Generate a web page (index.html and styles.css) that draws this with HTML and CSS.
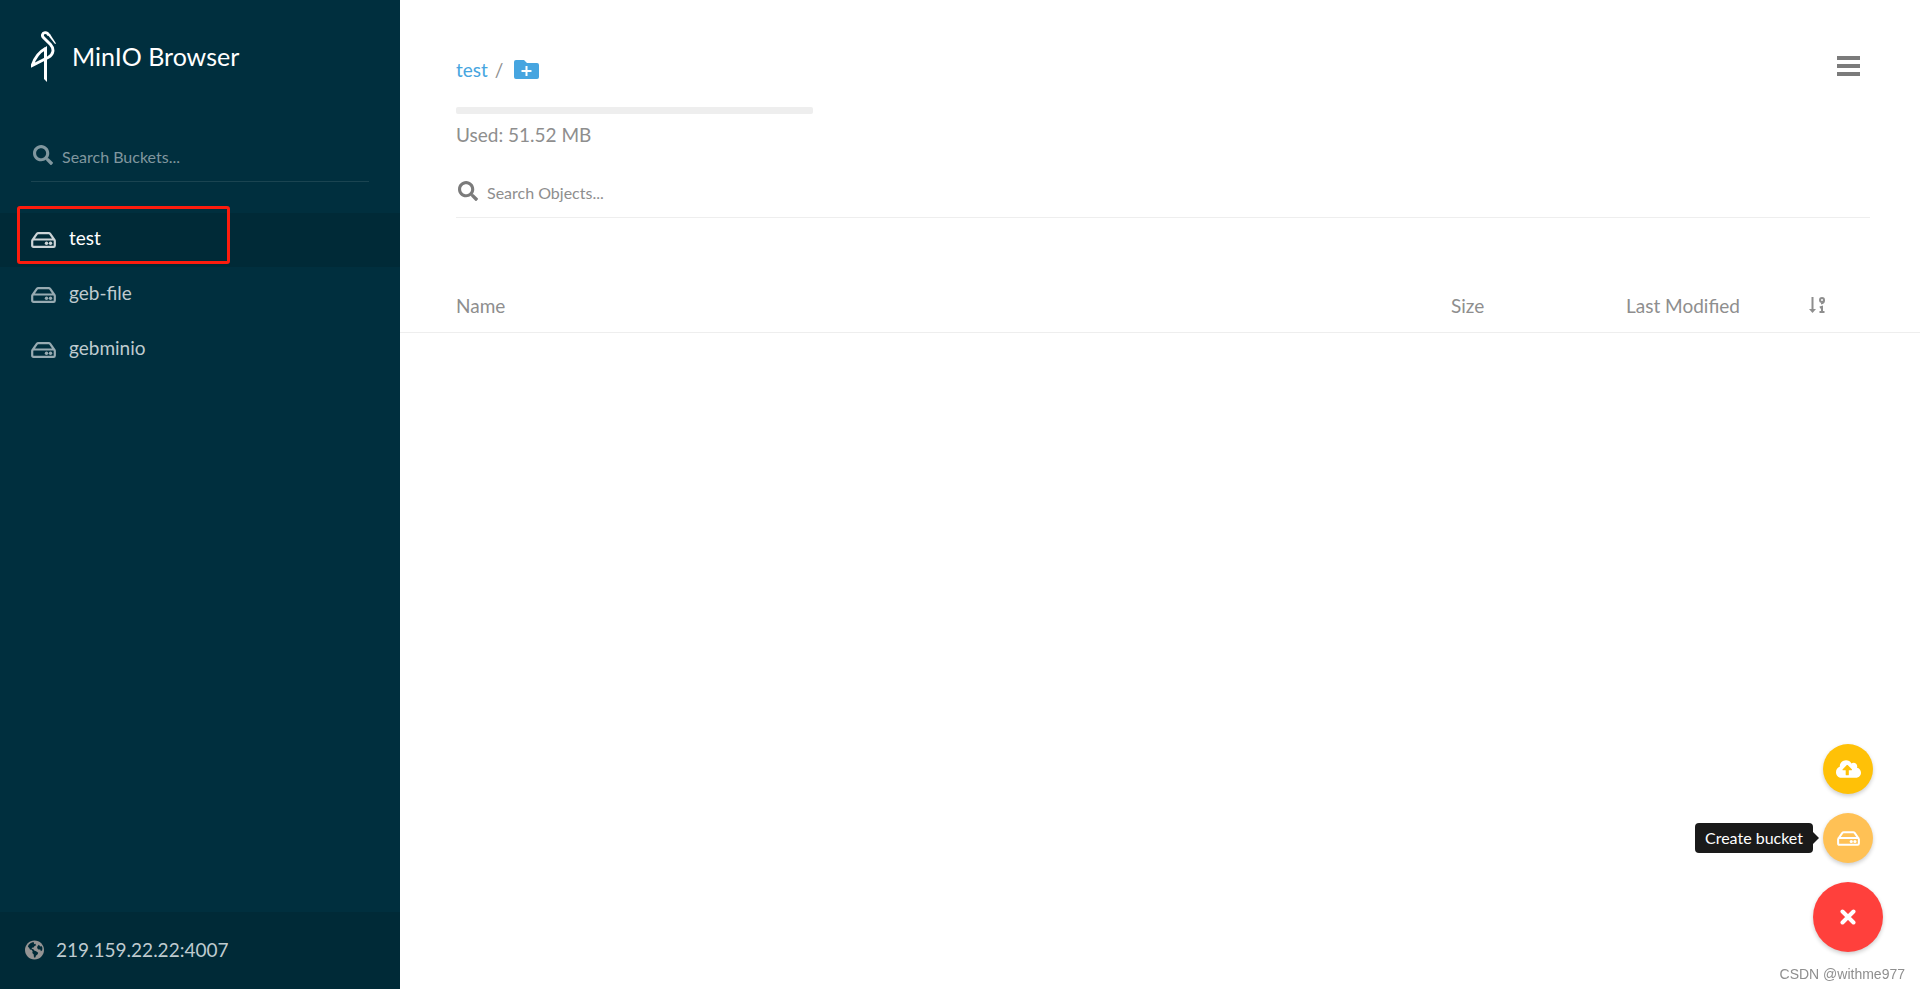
FILE: index.html
```html
<!DOCTYPE html>
<html lang="en">
<head>
    <meta charset="UTF-8">
    <meta name="viewport" content="width=device-width, initial-scale=1.0">
    <title>MinIO Browser</title>
    <link rel="stylesheet" href="styles.css">
</head>
<body>
    <!-- shared icons -->
    <svg class="sprite" aria-hidden="true">
        <symbol id="icon-search" viewBox="0 0 512 512">
            <path d="M505 442.7L405.3 343c-4.5-4.5-10.6-7-17-7H372c27.6-35.3 44-79.7 44-128C416 93.1 322.9 0 208 0S0 93.1 0 208s93.1 208 208 208c48.3 0 92.7-16.4 128-44v16.3c0 6.4 2.5 12.5 7 17l99.7 99.7c9.4 9.4 24.6 9.4 33.9 0l28.3-28.3c9.4-9.4 9.4-24.6.1-34zM208 336c-70.7 0-128-57.2-128-128 0-70.7 57.2-128 128-128 70.7 0 128 57.2 128 128 0 70.7-57.2 128-128 128z"/>
        </symbol>
        <symbol id="icon-drive" viewBox="0 0 25 16">
            <path d="M1.200 8.500 5.800 1.900Q6.400 1.100 7.300 1.100H17.700Q18.600 1.100 19.200 1.900L23.800 8.500M2.500 7.500H22.500Q23.800 7.500 23.800 9V13.500Q23.800 14.900 22.500 14.900H2.500Q1.200 14.900 1.200 13.500V9Q1.200 7.500 2.500 7.500Z" fill="none" stroke="currentColor" stroke-width="2.200"/>
            <circle cx="15.500" cy="11.300" r="1.700"/>
            <circle cx="19.500" cy="11.300" r="1.700"/>
        </symbol>
    </svg>

    <div class="page">
        <aside class="sidebar">
            <header class="brand">
                <svg class="brand-logo" viewBox="0 0 25 51" aria-hidden="true">
                    <path d="M18 4.500C17 2 15.500 1.500 14 1.600 11.400 1.800 10.800 4.600 12.200 6.300L19.500 13.500C23.500 18 22.500 23.500 17.500 26.200L1.200 34.500C3.500 27.500 8 21 14.400 17.500" fill="none" stroke="currentColor" stroke-width="2.900"/>
                    <path d="M16 3 19 3 25 12.500 24 13Z"/>
                    <path d="M13 17 16 15V51L13 48Z"/>
                </svg>
                <h1>MinIO Browser</h1>
            </header>

            <label class="search search-buckets">
                <svg class="search-icon" aria-hidden="true"><use href="#icon-search"/></svg>
                <input type="text" placeholder="Search Buckets..." aria-label="Search Buckets">
            </label>

            <nav class="buckets">
                <a class="bucket active" href="#test">
                    <svg class="drive" aria-hidden="true"><use href="#icon-drive"/></svg>
                    test
                    <span class="highlight"></span>
                </a>
                <a class="bucket" href="#geb-file">
                    <svg class="drive" aria-hidden="true"><use href="#icon-drive"/></svg>
                    geb-file
                </a>
                <a class="bucket" href="#gebminio">
                    <svg class="drive" aria-hidden="true"><use href="#icon-drive"/></svg>
                    gebminio
                </a>
            </nav>

            <footer class="host">
                <svg class="globe" viewBox="0 0 496 512" aria-hidden="true">
                    <path d="M248 8C111 8 0 119 0 256s111 248 248 248 248-111 248-248S385 8 248 8z"/>
                    <path class="land" d="M215 50 150 70 95 120 75 165 110 205 130 240 175 250 200 295 190 335 225 370 235 450 270 450 285 405 330 370 345 325 290 290 240 270 220 235 175 225 180 195 225 190 250 150 290 130 270 95 230 105 240 75ZM360 120 325 160 315 205 350 245 400 240 415 290 450 260 455 200 430 150 400 165Z"/>
                </svg>
                <a href="#host">219.159.22.22:4007</a>
            </footer>
        </aside>

        <main class="content">
            <header class="toolbar">
                <div class="path">
                    <a href="#test">test</a>
                    <span>/</span>
                    <button class="new-folder" type="button" aria-label="Create new path">
                        <svg viewBox="0 0 25 19" aria-hidden="true">
                            <path fill-rule="evenodd" d="M2 0H10L13 3H23Q25 3 25 5V17Q25 19 23 19H2Q0 19 0 17V2Q0 0 2 0ZM11.500 6V10H7.500V12H11.500V16H13.500V12H17.500V10H13.500V6Z"/>
                        </svg>
                    </button>
                </div>
                <button class="menu" type="button" aria-label="Menu">
                    <span></span>
                    <span></span>
                    <span></span>
                </button>
            </header>

            <div class="usage">
                <div class="usage-bar"></div>
                <p>Used: 51.52 MB</p>
            </div>

            <label class="search search-objects">
                <svg class="search-icon" aria-hidden="true"><use href="#icon-search"/></svg>
                <input type="text" placeholder="Search Objects..." aria-label="Search Objects">
            </label>

            <table class="objects">
                <thead>
                    <tr>
                        <th class="col-name">Name</th>
                        <th class="col-size">Size</th>
                        <th class="col-date">Last Modified</th>
                        <th class="col-sort">
                            <button type="button" aria-label="Sort">
                                <svg viewBox="0 0 16 16" aria-hidden="true">
                                    <path d="M2.500 0H4.500V12H7L3.500 16 0 12H2.500Z"/>
                                    <path d="M11 3A2 2 0 1 0 15 3A2 2 0 1 0 11 3M15 3Q15.200 6 12 6.500M10.800 10.500 13 9.800V15M10.500 15H15.500" fill="none" stroke="currentColor" stroke-width="2"/>
                                </svg>
                            </button>
                        </th>
                    </tr>
                </thead>
            </table>
        </main>
    </div>

    <div class="actions">
        <button class="action upload" type="button" aria-label="Upload file">
            <svg viewBox="0 0 640 512" aria-hidden="true">
                <path d="M537.600 226.600c4.100-10.700 6.400-22.400 6.400-34.600 0-53-43-96-96-96-19.700 0-38.100 6-53.300 16.200C367 64.200 315.300 32 256 32c-88.400 0-160 71.600-160 160 0 2.700.1 5.400.2 8.100C40.200 219.800 0 273.200 0 336c0 79.500 64.500 144 144 144h368c70.700 0 128-57.300 128-128 0-61.900-44-113.600-102.400-125.400zM393.400 288H328v112c0 8.800-7.200 16-16 16h-48c-8.800 0-16-7.200-16-16V288h-65.400c-14.300 0-21.400-17.200-11.300-27.300l105.400-105.400c6.200-6.200 16.400-6.200 22.600 0l105.400 105.400c10.100 10.100 2.900 27.300-11.300 27.300z"/>
            </svg>
        </button>
        <button class="action create" type="button" aria-label="Create bucket">
            <svg aria-hidden="true"><use href="#icon-drive"/></svg>
            <span class="tip">Create bucket</span>
        </button>
        <button class="action close" type="button" aria-label="Close">
            <svg viewBox="0 0 16 16" aria-hidden="true">
                <path d="M2.500 2.500 13.500 13.500M13.500 2.500 2.500 13.500" fill="none" stroke="currentColor" stroke-width="4" stroke-linecap="round"/>
            </svg>
        </button>
    </div>
    <div class="watermark">CSDN @withme977</div>
</body>
</html>
```
FILE: styles.css
```css
* {
    box-sizing: border-box;
}

body {
    margin: 0;
    font-family: Lato, sans-serif;
    font-size: 19px;
    line-height: 27px;
    color: #8e8e8e;
    background-color: #fff;
}

a {
    color: inherit;
    text-decoration: none;
}

button {
    padding: 0;
    border: none;
    background: none;
    color: inherit;
    cursor: pointer;
}

svg {
    display: block;
    fill: currentColor;
}

.sprite {
    display: none;
}

.page {
    display: flex;
    min-height: 100vh;
}

/* Sidebar */
.sidebar {
    display: flex;
    flex-direction: column;
    width: 400px;
    flex-shrink: 0;
    background-color: #002f3e;
    color: #bfcbcf;
}

.brand {
    display: flex;
    align-items: center;
    gap: 16px;
    padding: 31px 31px 0;
    color: #fff;
}

.brand-logo {
    width: 25px;
    height: 51px;
}

.brand h1 {
    margin: 0;
    font-size: 25px;
    font-weight: 400;
}

.search {
    display: flex;
    align-items: center;
    gap: 9px;
    height: 50px;
    padding: 0 2px;
}

.search-icon {
    width: 20px;
    height: 20px;
    margin-bottom: 4px;
    flex-shrink: 0;
}

.search input {
    flex: 1;
    min-width: 0;
    padding: 0;
    border: none;
    outline: none;
    background: none;
    color: inherit;
    font-family: inherit;
    font-size: 16px;
}

.search input::placeholder {
    color: inherit;
    opacity: 1;
}

.search-buckets {
    margin: 50px 31px 0;
    border-bottom: 1px solid #1a4451;
    color: #80979f;
}

.buckets {
    display: flex;
    flex-direction: column;
    gap: 1px;
    margin-top: 31px;
    flex: 1;
}

.bucket {
    position: relative;
    display: flex;
    align-items: center;
    gap: 13px;
    height: 54px;
    padding: 0 31px 5px;
}

.bucket.active {
    background-color: #002a37;
    color: #fff;
}

.drive {
    width: 25px;
    height: 16px;
    margin-top: 4px;
    opacity: 0.8;
}

.highlight {
    position: absolute;
    top: -7px;
    left: 17px;
    width: 213px;
    height: 58px;
    border: 3px solid #fd1c0d;
    border-radius: 3px;
}

.host {
    display: flex;
    align-items: center;
    gap: 12px;
    height: 77px;
    padding: 0 25px 2px;
    background-color: #002a37;
}

.globe {
    width: 19px;
    height: 20px;
    color: #949494;
}

.globe .land {
    fill: #002a37;
}

/* Content */
.content {
    flex: 1;
    min-width: 0;
}

.toolbar {
    display: flex;
    justify-content: space-between;
    padding: 56px 60px 0 56px;
}

.path {
    display: flex;
    align-items: center;
    gap: 7px;
}

.path a,
.new-folder {
    color: #46a5e0;
}

.new-folder {
    margin-left: 4px;
}

.new-folder svg {
    width: 25px;
    height: 19px;
}

.menu {
    display: flex;
    flex-direction: column;
    gap: 4px;
    width: 23px;
}

.menu span {
    width: 100%;
    height: 4px;
    background-color: #7b7b7b;
}

.usage {
    padding: 24px 56px 0;
}

.usage-bar {
    max-width: 357px;
    height: 7px;
    border-radius: 2px;
    background-color: #eee;
}

.usage p {
    margin: 7px 0 0;
}

.search-objects {
    margin: 20px 50px 0 56px;
    border-bottom: 1px solid #eee;
}

.search-objects .search-icon {
    color: #7b7b7b;
}

.objects {
    width: 100%;
    margin-top: 62px;
    border-collapse: collapse;
    table-layout: fixed;
}

.objects th {
    height: 52px;
    padding: 0;
    border-bottom: 1px solid #eee;
    font-weight: 400;
    text-align: left;
}

.objects .col-name {
    padding-left: 56px;
}

.col-size {
    width: 175px;
}

.col-date {
    width: 183px;
}

.col-sort {
    width: 111px;
}

.col-sort svg {
    width: 16px;
    height: 16px;
}

/* Floating buttons */
.actions {
    position: fixed;
    right: 37px;
    bottom: 37px;
    display: flex;
    flex-direction: column;
    align-items: center;
    gap: 19px;
}

.action {
    position: relative;
    display: flex;
    align-items: center;
    justify-content: center;
    width: 50px;
    height: 50px;
    border-radius: 50%;
    box-shadow: 0 2px 4px rgba(0, 0, 0, 0.2);
    color: #fff;
}

.upload {
    background-color: #ffc107;
}

.upload svg {
    width: 25px;
    height: 20px;
}

.create {
    background-color: #ffc155;
}

.create svg {
    width: 23px;
    height: 15px;
}

.close {
    width: 70px;
    height: 70px;
    background-color: #ff403c;
}

.close svg {
    width: 16px;
    height: 16px;
}

.tip {
    position: absolute;
    right: 60px;
    top: 10px;
    padding: 0 10px;
    border-radius: 4px;
    background-color: #1a1a1a;
    font-family: Lato, sans-serif;
    font-size: 16px;
    line-height: 30px;
    white-space: nowrap;
}

.tip::after {
    content: "";
    position: absolute;
    left: 100%;
    top: 9px;
    border: 6px solid transparent;
    border-left-color: #1a1a1a;
    border-right: none;
}

.watermark {
    position: fixed;
    right: 15px;
    bottom: 5px;
    font-family: "Liberation Sans", Arial, sans-serif;
    font-size: 14px;
    line-height: 20px;
    color: #8f8f8f;
}
```
